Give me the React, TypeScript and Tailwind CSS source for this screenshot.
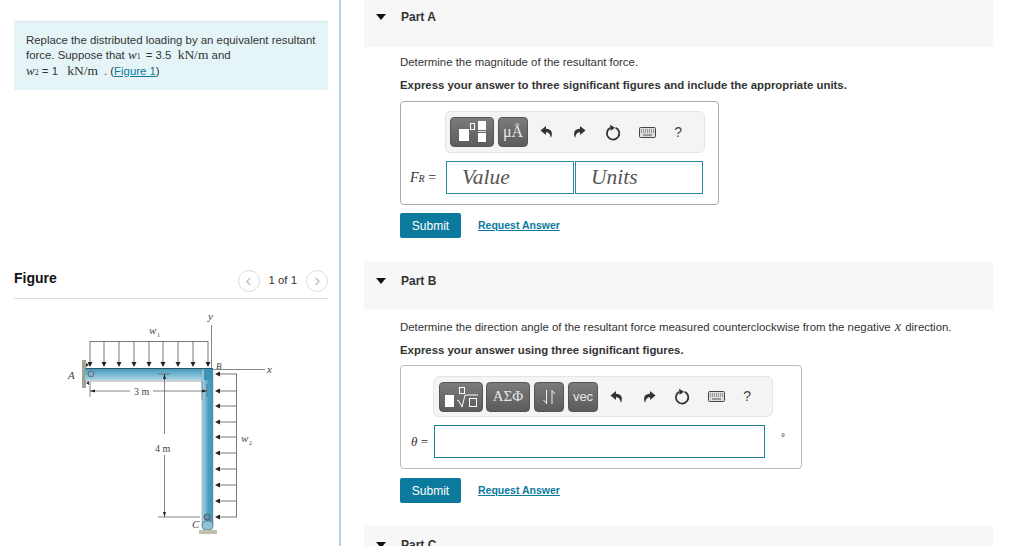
import React from 'react';
import { ChevronLeft, ChevronRight } from 'lucide-react';

const sans = 'font-["Liberation_Sans",Arial,sans-serif]';
const serif = 'font-["Liberation_Serif","Times_New_Roman",serif]';

const Btn = ({ w, children }: { w: string; children: React.ReactNode }) => (
    <div className={`${w} h-[30px] shrink-0 rounded-[4px] bg-gradient-to-b from-[#7b7b7b] to-[#5c5c5c] border border-[#555] flex items-center justify-center text-[#e8e8e8] overflow-hidden`}>
        {children}
    </div>
);

const Undo = () => (
    <svg width="14" height="14" viewBox="0 0 14 14" fill="#333">
        <path d="M6 1 L0.5 5.5 L6 10 V7.3 C8.6 7.3 10.2 8.6 10.8 13 C13 8.6 12.2 3.8 6 3.7 Z" />
    </svg>
);

const Redo = () => (
    <svg width="14" height="14" viewBox="0 0 14 14" fill="#333">
        <path d="M8 1 L13.5 5.5 L8 10 V7.3 C5.4 7.3 3.8 8.6 3.2 13 C1 8.6 1.8 3.8 8 3.7 Z" />
    </svg>
);

const Reload = () => (
    <svg width="16" height="17" viewBox="0 0 16 17" fill="none">
        <path d="M5.2 3.9 A6.2 6.2 0 1 0 10.6 3.7" stroke="#333" strokeWidth="1.8" />
        <path d="M5 0.8 L10.2 3.8 L5.6 6.8 Z" fill="#333" />
    </svg>
);

const Keyboard = () => (
    <svg width="17" height="11" viewBox="0 0 17 11">
        <rect x="0.5" y="0.5" width="16" height="10" rx="1" fill="#ddd" stroke="#444" />
        <path d="M2 3h13M2 5h13" stroke="#555" strokeDasharray="1 1" />
        <path d="M4 8h9" stroke="#555" />
    </svg>
);

const Tools = () => (
    <>
        <Undo />
        <Redo />
        <Reload />
        <Keyboard />
        <span className={`${sans} text-[14px] text-[#444]`}>?</span>
    </>
);

const PartHeader = ({ label, h, pb }: { label: string; h: string; pb: string }) => (
    <div className={`${h} ${pb} bg-[#f7f7f7] flex items-center pl-[12px] shrink-0`}>
        <div className="flex items-center h-[14px]">
            <div className="w-0 h-0 border-l-[5px] border-r-[5px] border-t-[6px] border-l-transparent border-r-transparent border-t-[#111]" />
            <span className="ml-[15px] text-[12px] font-bold text-[#333]">{label}</span>
        </div>
    </div>
);

const SubmitRow = () => (
    <div className="flex items-center mt-[8px]">
        <div className="w-[61px] h-[25px] bg-[#0b7a9d] rounded-[2px] text-white text-[12px] flex items-center justify-center">Submit</div>
        <span className="ml-[17px] text-[10.5px] font-bold text-[#0b7a9d] underline">Request Answer</span>
    </div>
);

// drawn in page coordinates, the svg itself starts at 60,310
const Figure = () => (
    <svg width="222" height="236" viewBox="60 310 222 236" className="block">
        <defs>
            <linearGradient id="h" x1="0" y1="0" x2="0" y2="1">
                <stop offset="0" stopColor="#3f93b8" />
                <stop offset="1" stopColor="#a9d6e6" />
            </linearGradient>
            <linearGradient id="v" x1="0" y1="0" x2="1" y2="0">
                <stop offset="0" stopColor="#a9d6e6" />
                <stop offset="0.6" stopColor="#4b9fc4" />
                <stop offset="1" stopColor="#3f93b8" />
            </linearGradient>
        </defs>
        <rect x="82" y="360" width="4" height="28" fill="#a3a394" />
        <path d="M86 363l3 2-3 2zM86 383l3-2 0 4z" fill="#333" />
        {/* frame */}
        <rect x="85" y="368" width="128" height="12" fill="url(#h)" />
        <rect x="202" y="369" width="11" height="158" rx="2" fill="url(#v)" stroke="#888" strokeWidth="0.5" />
        <rect x="204" y="368" width="9" height="12" fill="#3f93b8" />
        <path d="M86 368.5H213" stroke="#28566b" strokeWidth="1" />
        <path d="M86 381H202V400" stroke="#888" strokeWidth="0.8" fill="none" />
        <circle cx="91" cy="374" r="3" fill="#7fb0c0" stroke="#555" strokeWidth="0.7" />
        {/* top load */}
        <path d="M90 341.5H208" stroke="#555" strokeWidth="0.8" />
        {[90, 104, 119, 134, 149, 163, 178, 193, 208].map((x) => (
            <g key={x}>
                <path d={`M${x} 341V363`} stroke="#555" strokeWidth="0.8" />
                <path d={`M${x - 2.5} 362h5l-2.5 5z`} fill="#222" />
            </g>
        ))}
        {/* side load */}
        <path d="M236.5 374V517" stroke="#555" strokeWidth="0.8" />
        {[374, 391, 406, 422, 437, 453, 469, 485, 501, 517].map((y) => (
            <g key={y}>
                <path d={`M237 ${y}H218`} stroke="#555" strokeWidth="0.8" />
                <path d={`M220 ${y - 2.5}v5l-5 -2.5z`} fill="#222" />
            </g>
        ))}
        {/* axes */}
        <path d="M211.5 325V368M213 369.5H265" stroke="#666" strokeWidth="0.8" />
        {/* dimensions */}
        <path d="M90 382V397M207 384V397M90 391H130M153 391H207" stroke="#666" strokeWidth="0.8" />
        <path d="M158 374H170M164.5 374V434M164.5 455V517M158 517H200" stroke="#666" strokeWidth="0.8" />
        <path d="M90 391l5 -1.5v3zM207 391l-5 -1.5v3zM164.5 374l-1.5 5h3zM164.5 517l-1.5 -5h3z" fill="#222" />
        {/* pin at C */}
        <circle cx="207" cy="517" r="3" fill="#6a97a8" stroke="#444" strokeWidth="0.8" />
        <rect x="202" y="521" width="11" height="9" rx="4" fill="#8fc4d8" stroke="#555" strokeWidth="0.6" />
        <rect x="199" y="530" width="18" height="4" fill="#c0c0b0" />
        <g fontFamily="Liberation Serif, serif" fontSize="11" fill="#444" fontStyle="italic">
            <text x="208" y="320">y</text>
            <text x="149" y="334">w</text>
            <text x="157" y="337" fontSize="6" fontStyle="normal">1</text>
            <text x="68" y="379">A</text>
            <text x="216" y="369" fontSize="9">B</text>
            <text x="267" y="373">x</text>
            <text x="241" y="442">w</text>
            <text x="249" y="445" fontSize="6" fontStyle="normal">2</text>
            <text x="192" y="528">C</text>
            <text x="134" y="395" fontSize="10" fontStyle="normal">3 m</text>
            <text x="155" y="452" fontSize="10" fontStyle="normal">4 m</text>
        </g>
    </svg>
);

export default function App() {
    return (
        <div className={`${sans} w-[1024px] h-[546px] overflow-hidden flex bg-white text-[#333]`}>
            <div className="w-[341px] shrink-0 border-r-2 border-[#bcd3e6] flex flex-col pl-[14px] pr-[11px]">
                <div className="mt-[21px] h-[69px] bg-[#e5f5f7] border-t border-[#dbe8ec] px-[12px] pt-[11px] text-[11.4px] text-[#333]">
                    <div className="h-[14px] leading-[14px] whitespace-nowrap">Replace the distributed loading by an equivalent resultant</div>
                    <div className="h-[15px] leading-[15px] whitespace-nowrap">
                        force. Suppose that <i className={`${serif} text-[13px]`}>w</i><span className={`${serif} text-[8px]`}>1</span> <span className="ml-[2px]">= 3.5</span> <span className={`${serif} text-[13.5px] ml-[3px]`}>kN/m</span> and
                    </div>
                    <div className="h-[17px] leading-[17px] whitespace-nowrap">
                        <i className={`${serif} text-[13px]`}>w</i><span className={`${serif} text-[8px]`}>2</span> = 1 <span className={`${serif} text-[13.5px] ml-[6px]`}>kN/m</span><span className="ml-[6px]">.</span> (<span className="text-[#0b7a9d] underline">Figure 1</span>)
                    </div>
                </div>
                <div className="mt-[174px] h-[35px] border-b border-[#ddd] flex items-center justify-between">
                    <span className="text-[14px] font-bold text-[#111] -mt-[5px]">Figure</span>
                    <div className="flex items-center">
                        <div className="w-[22px] h-[22px] rounded-full border border-[#ddd] flex items-center justify-center">
                            <ChevronLeft size={13} className="text-[#bbb]" />
                        </div>
                        <span className="mx-[9px] text-[11.4px]">1 of 1</span>
                        <div className="w-[22px] h-[22px] rounded-full border border-[#ddd] flex items-center justify-center">
                            <ChevronRight size={13} className="text-[#bbb]" />
                        </div>
                    </div>
                </div>
                <div className="mt-[11px] ml-[46px]">
                    <Figure />
                </div>
            </div>

            <div className="ml-[23px] w-[629px] flex flex-col text-[11.4px]">
                <PartHeader label="Part A" h="h-[47px]" pb="pb-[13px]" />
                <div className="pl-[36px] pt-[8px]">
                    <div className="leading-[14px]">Determine the magnitude of the resultant force.</div>
                    <div className="mt-[9px] font-bold leading-[14px] whitespace-nowrap">Express your answer to three significant figures and include the appropriate units.</div>
                    <div className="mt-[9px] w-[319px] h-[104px] border border-[#aaa] rounded-[4px] pl-[44px] pt-[9px]">
                        <div className="w-[260px] h-[42px] bg-[#f4f4f4] border border-[#e4e4e4] rounded-[6px] flex items-center pl-[4px]">
                            <Btn w="w-[44px]">
                                <svg width="30" height="24" viewBox="0 0 30 24">
                                    <rect x="2" y="9" width="10" height="12" fill="#fff" />
                                    <rect x="13.5" y="3.5" width="4" height="6" fill="none" stroke="#fff" />
                                    <rect x="21" y="1" width="8" height="9" fill="#fff" />
                                    <rect x="21" y="11" width="8" height="1" fill="#ddd" />
                                    <rect x="21" y="13" width="8" height="9" fill="#fff" />
                                </svg>
                            </Btn>
                            <div className="ml-[4px]">
                                <Btn w="w-[30px]"><span className={`${serif} text-[16px]`}>μÅ</span></Btn>
                            </div>
                            <div className="flex-1 flex items-center justify-between pl-[12px] pr-[22px]">
                                <Tools />
                            </div>
                        </div>
                        <div className="flex items-center -ml-[35px] mt-[8px]">
                            <span className={`${serif} w-[36px] text-[14px] italic text-[#333] whitespace-nowrap`}>F<span className="text-[10px]">R</span> <span className="not-italic">=</span></span>
                            <div className={`${serif} w-[128px] h-[33px] border border-[#2a8aa8] italic text-[21.5px] text-[#555] pl-[15px] flex items-center`}>Value</div>
                            <div className={`${serif} ml-[1px] w-[128px] h-[33px] border border-[#2a8aa8] italic text-[21.5px] text-[#555] pl-[15px] flex items-center`}>Units</div>
                        </div>
                    </div>
                    <SubmitRow />
                </div>
                <div className="mt-[24px]">
                    <PartHeader label="Part B" h="h-[48px]" pb="pb-[10px]" />
                </div>
                <div className="pl-[36px] pt-[10px]">
                    <div className="leading-[14px] whitespace-nowrap">Determine the direction angle of the resultant force measured counterclockwise from the negative <i className={`${serif} text-[14px] mx-[1px]`}>x</i> direction.</div>
                    <div className="mt-[9px] font-bold leading-[14px]">Express your answer using three significant figures.</div>
                    <div className="mt-[8px] w-[402px] h-[104px] border border-[#bbb] rounded-[4px] pl-[32px] pt-[10px] relative">
                        <div className="w-[340px] h-[41px] bg-[#f4f4f4] border border-[#e4e4e4] rounded-[6px] flex items-center pl-[5px]">
                            <Btn w="w-[44px]">
                                <svg width="38" height="26" viewBox="0 0 38 26" fill="none">
                                    <rect x="3" y="11" width="9" height="12" fill="#fff" />
                                    <rect x="17.5" y="3.5" width="5" height="6" stroke="#fff" />
                                    <path d="M15 16l2 1 3 6 3-12h13" stroke="#fff" />
                                    <rect x="27.5" y="14.5" width="7" height="8" stroke="#fff" />
                                </svg>
                            </Btn>
                            <div className="ml-[3px]">
                                <Btn w="w-[44px]"><span className={`${serif} text-[15px] whitespace-nowrap`}>ΑΣΦ</span></Btn>
                            </div>
                            <div className="ml-[4px]">
                                <Btn w="w-[30px]">
                                    <svg width="14" height="16" viewBox="0 0 14 16" fill="none" stroke="#eee">
                                        <path d="M4.5 1V14.5L1.5 11M10 15V1.5L13 5" />
                                    </svg>
                                </Btn>
                            </div>
                            <div className="ml-[4px]">
                                <Btn w="w-[30px]"><span className="text-[13px]">vec</span></Btn>
                            </div>
                            <div className="flex-1 flex items-center justify-between pl-[12px] pr-[21px]">
                                <Tools />
                            </div>
                        </div>
                        <div className="flex items-center -ml-[22px] mt-[8px]">
                            <span className={`${serif} w-[23px] text-[13px] text-[#333] whitespace-nowrap`}><i>θ</i> =</span>
                            <div className="w-[331px] h-[33px] border border-[#1f7fa0]" />
                        </div>
                        <span className="absolute right-[16px] top-[67px] text-[10px] leading-none">°</span>
                    </div>
                    <div className="h-px" />
                    <SubmitRow />
                </div>
                <div className="mt-[23px]">
                    <PartHeader label="Part C" h="h-[48px]" pb="pb-[10px]" />
                </div>
            </div>
        </div>
    );
}
